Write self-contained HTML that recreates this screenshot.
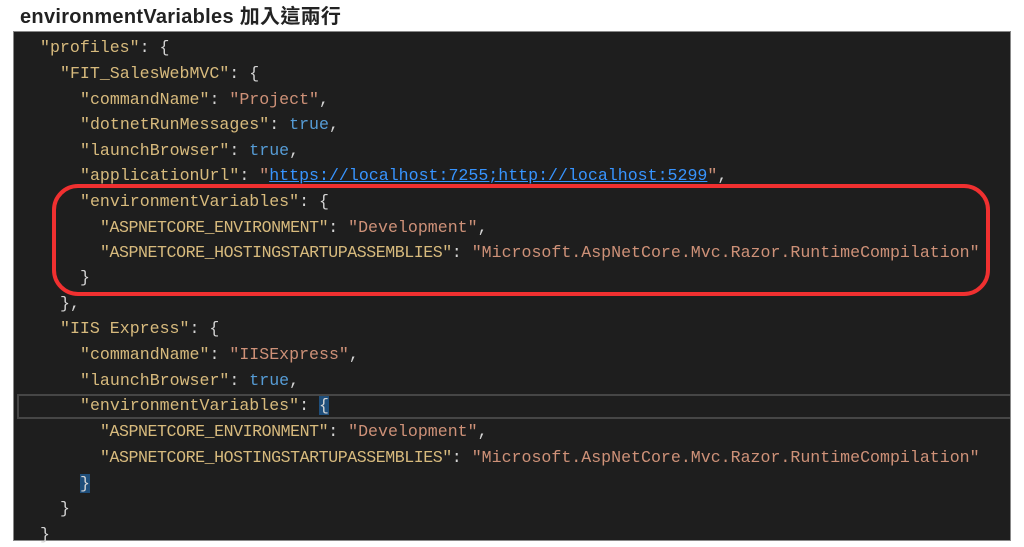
<!DOCTYPE html>
<html><head><meta charset="utf-8"><style>
body{margin:0;width:1024px;height:538px;background:#fff;position:relative;overflow:hidden}
.t{position:absolute;left:20px;top:0px;font:bold 20px "Liberation Sans","Noto Sans CJK TC",sans-serif;color:#222;letter-spacing:0.3px}
.p{position:absolute;left:13px;top:31px;width:998px;height:510px;background:#1e1e1e;border:1px solid #888;box-sizing:border-box}
.c{position:absolute;left:0;top:0;font-family:"Liberation Mono",monospace;font-size:16.6px;white-space:pre;color:#d4d4d4}
.l{position:absolute;height:25px;line-height:25px}
.k{color:#d7ba7d}.s{color:#ce9178}.b{color:#569cd6}.u{color:#3794ff;text-decoration:underline}
.cap{letter-spacing:-0.45px}
.hl{position:absolute;left:3px;top:362px;width:993px;height:25px;border:2px solid #464646;border-right:none;box-sizing:border-box}
.box{position:absolute;left:52px;top:184px;width:938px;height:112px;border:4px solid #f03030;border-radius:26px;box-sizing:border-box}
.br{background:#1f4e7a}
</style></head><body>
<div class="t">environmentVariables 加入這兩行</div>
<div class="p">
<div class="hl"></div>
<div class="c">
<div class="l" style="left:26px;top:3px"><span class="k">"profiles"</span>: {</div>
<div class="l" style="left:46px;top:29px"><span class="k">"FIT_SalesWebMVC"</span>: {</div>
<div class="l" style="left:66px;top:55px"><span class="k">"commandName"</span>: <span class="s">"Project"</span>,</div>
<div class="l" style="left:66px;top:80px"><span class="k">"dotnetRunMessages"</span>: <span class="b">true</span>,</div>
<div class="l" style="left:66px;top:106px"><span class="k">"launchBrowser"</span>: <span class="b">true</span>,</div>
<div class="l" style="left:66px;top:131px"><span class="k">"applicationUrl"</span>: <span class="s">"</span><span class="u">https://localhost:7255;http://localhost:5299</span><span class="s">"</span>,</div>
<div class="l" style="left:66px;top:157px"><span class="k">"environmentVariables"</span>: {</div>
<div class="l" style="left:86px;top:183px"><span class="k cap">"ASPNETCORE_ENVIRONMENT"</span>: <span class="s">"Development"</span>,</div>
<div class="l" style="left:86px;top:208px"><span class="k cap">"ASPNETCORE_HOSTINGSTARTUPASSEMBLIES"</span>: <span class="s">"Microsoft.AspNetCore.Mvc.Razor.RuntimeCompilation"</span></div>
<div class="l" style="left:66px;top:233px">}</div>
<div class="l" style="left:46px;top:259px">},</div>
<div class="l" style="left:46px;top:284px"><span class="k">"IIS Express"</span>: {</div>
<div class="l" style="left:66px;top:310px"><span class="k">"commandName"</span>: <span class="s">"IISExpress"</span>,</div>
<div class="l" style="left:66px;top:336px"><span class="k">"launchBrowser"</span>: <span class="b">true</span>,</div>
<div class="l" style="left:66px;top:361px"><span class="k">"environmentVariables"</span>: <span class="br">{</span></div>
<div class="l" style="left:86px;top:387px"><span class="k cap">"ASPNETCORE_ENVIRONMENT"</span>: <span class="s">"Development"</span>,</div>
<div class="l" style="left:86px;top:413px"><span class="k cap">"ASPNETCORE_HOSTINGSTARTUPASSEMBLIES"</span>: <span class="s">"Microsoft.AspNetCore.Mvc.Razor.RuntimeCompilation"</span></div>
<div class="l" style="left:66px;top:439px"><span class="br">}</span></div>
<div class="l" style="left:46px;top:464px">}</div>
<div class="l" style="left:26px;top:490px">}</div>
</div>
</div>
<div class="box"></div>
</body></html>
